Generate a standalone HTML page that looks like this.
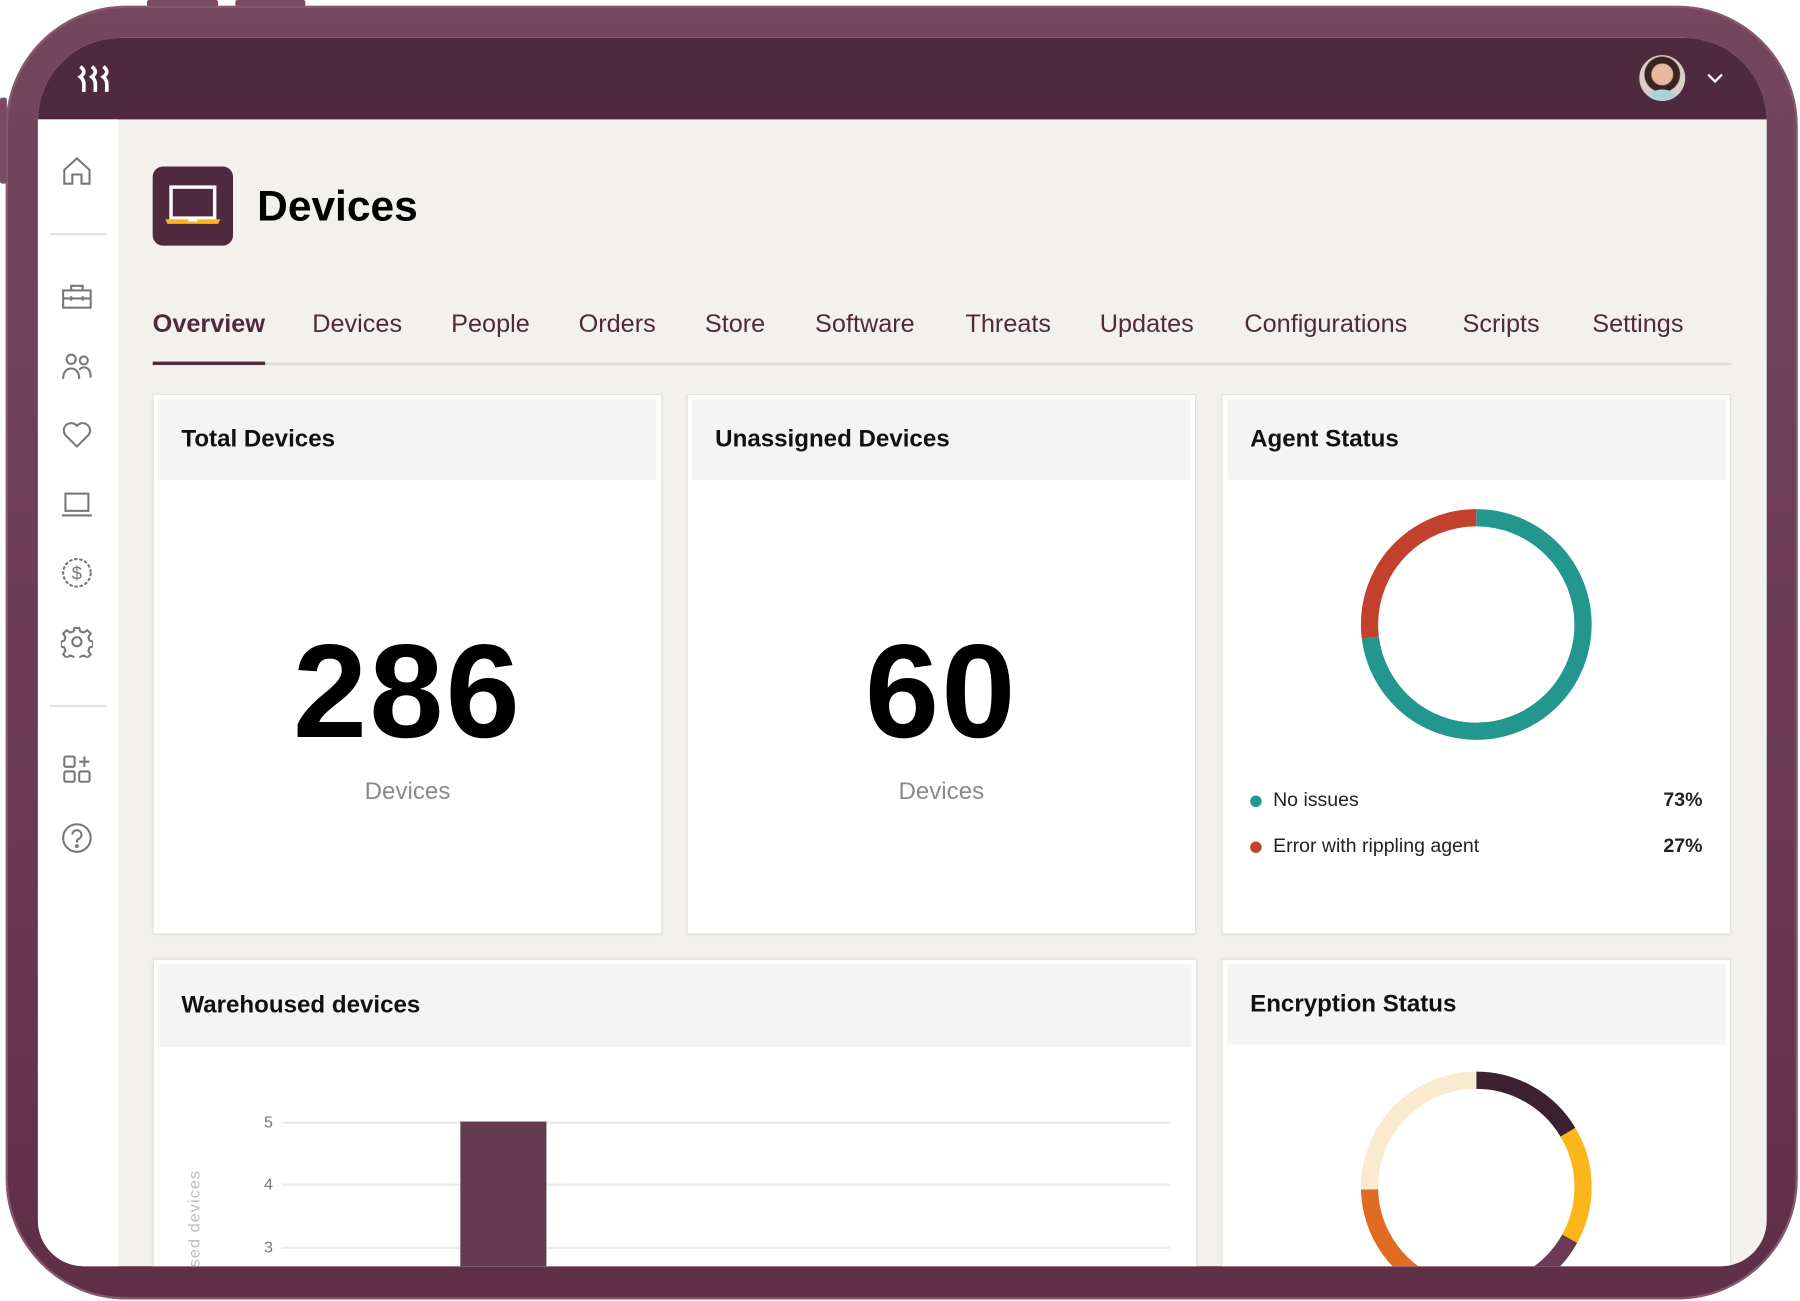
<!DOCTYPE html>
<html><head><meta charset="utf-8">
<style>
*{margin:0;padding:0;box-sizing:border-box}
html,body{width:1800px;height:1301px;overflow:hidden;background:#fff;font-family:"Liberation Sans",sans-serif}
#w{position:absolute;left:0;top:0;width:1568px;height:1133px;transform:scale(1.14796);transform-origin:0 0}
.abs{position:absolute}
.frame{left:5px;top:5px;width:1561px;height:1127px;border-radius:105px;background:linear-gradient(180deg,#74475e,#6a3b53 60%,#5f2f47);box-shadow:inset 0 0 0 2px #86586e}
.btn{background:#7a4a62;border-radius:2px}
.screen{left:33px;top:33px;width:1506px;height:1070px;border-radius:72px 72px 40px 40px;overflow:hidden;background:#f3f1ed}
.top{left:0;top:0;width:1506px;height:71px;background:#4f2a3e}
.side{left:0;top:71px;width:70px;height:1000px;background:#fff}
.ic{position:absolute;left:20px;width:28px;height:28px}
.div{position:absolute;left:10px;width:50px;height:2px;background:#e6e4e1}
.tabs span{position:absolute;top:0;font-size:22px;color:#4f2a3e;white-space:nowrap}
.card{position:absolute;background:#fff;border:1px solid #e2e0dc;box-shadow:0 1px 2px rgba(0,0,0,.06)}
.hd{position:absolute;left:4px;top:4px;right:4px;height:70px;background:#f4f4f4}
.hd b{position:absolute;left:20px;top:50%;transform:translateY(-50%);font-size:21px;font-weight:700;color:#111}
.big{position:absolute;left:0;right:0;text-align:center;font-weight:700;color:#000}
.sub{position:absolute;left:0;right:0;text-align:center;font-size:21px;color:#8a8a8a}
.lg{position:absolute;font-size:17px;color:#222}
</style></head><body>
<div id="w">
<div class="abs btn" style="left:128px;top:0;width:62px;height:6px"></div>
<div class="abs btn" style="left:205px;top:0;width:61px;height:6px"></div>
<div class="abs btn" style="left:0;top:85px;width:6px;height:75px"></div>
<div class="abs frame"></div>
<div class="abs screen">
  <div class="abs top">
    <svg class="abs" style="left:34px;top:24px" width="32" height="24" viewBox="0 0 32 24" fill="none" stroke="#fff" stroke-width="3.2" stroke-linecap="butt">
      <path d="M3 1c4 3 4 6 0 9c4 3 3 7 3 13"/><path d="M13 1c4 3 4 6 0 9c4 3 3 7 3 13"/><path d="M23 1c4 3 4 6 0 9c4 3 3 7 3 13"/>
    </svg>
    <div class="abs" style="left:1395px;top:15px;width:40px;height:40px;border-radius:50%;background:radial-gradient(circle at 50% 42%,#e6b89c 0 9px,#3a2420 10px 15px,#d9cfc8 16px);overflow:hidden">
      <div class="abs" style="left:8px;top:30px;width:24px;height:12px;border-radius:50% 50% 0 0;background:#a9d3d8"></div>
    </div>
    <svg class="abs" style="left:1453px;top:29px" width="16" height="12" viewBox="0 0 16 12"><path d="M2 3l6 6 6-6" stroke="#fff" stroke-width="2" fill="none"/></svg>
  </div>
  <div class="abs side">
    <svg class="ic" style="top:31px" viewBox="0 0 28 28" fill="none" stroke="#777" stroke-width="1.8"><path d="M3 13L14 3l11 10v12h-7v-8h-8v8H3z"/></svg>
    <div class="div" style="top:99px"></div>
    <svg class="ic" style="top:141px" viewBox="0 0 28 28" fill="none" stroke="#777" stroke-width="1.8"><rect x="2" y="8" width="24" height="15"/><path d="M9 8V4h10v4M2 15h24M9 13v4M19 13v4"/></svg>
    <svg class="ic" style="top:201px" viewBox="0 0 28 28" fill="none" stroke="#777" stroke-width="1.8"><circle cx="9" cy="8" r="4"/><circle cx="20" cy="9" r="3.5"/><path d="M2 25c0-6 3-9 7-9s7 3 7 9M16 17c1-1 2-2 4-2 4 0 6 3 6 9"/></svg>
    <svg class="ic" style="top:261px" viewBox="0 0 28 28" fill="none" stroke="#777" stroke-width="1.8"><path d="M14 24L4 14a6 6 0 0 1 10-8 6 6 0 0 1 10 8z"/></svg>
    <svg class="ic" style="top:321px" viewBox="0 0 28 28" fill="none" stroke="#777" stroke-width="1.8"><rect x="4" y="5" width="20" height="15"/><path d="M1 24h26"/></svg>
    <svg class="ic" style="top:381px" viewBox="0 0 28 28" fill="none" stroke="#777" stroke-width="1.8"><circle cx="14" cy="14" r="12" stroke-dasharray="3 1.5"/><text x="14" y="20" font-size="16" text-anchor="middle" fill="#777" stroke="none" font-family="Liberation Sans">$</text></svg>
    <svg class="ic" style="top:441px" viewBox="0 0 28 28" fill="none" stroke="#777" stroke-width="1.8"><path d="M12 2h4l1 3 3 1 3-2 3 3-2 3 1 3 3 1v4l-3 1-1 3 2 3-3 3-3-2-3 1-1 3h-4l-1-3-3-1-3 2-3-3 2-3-1-3-3-1v-4l3-1 1-3-2-3 3-3 3 2 3-1z"/><circle cx="14" cy="14" r="4"/></svg>
    <div class="div" style="top:510px"></div>
    <svg class="ic" style="top:552px" viewBox="0 0 28 28" fill="none" stroke="#777" stroke-width="1.8"><rect x="3" y="3" width="9" height="9" rx="1.5"/><rect x="3" y="16" width="9" height="9" rx="1.5"/><rect x="16" y="16" width="9" height="9" rx="1.5"/><path d="M20.5 3v9M16 7.5h9"/></svg>
    <svg class="ic" style="top:612px" viewBox="0 0 28 28" fill="none" stroke="#777" stroke-width="1.8"><circle cx="14" cy="14" r="12"/><path d="M10 11a4 4 0 1 1 5 4c-1 .5-1 1.5-1 3"/><circle cx="14" cy="21" r=".8" fill="#777"/></svg>
  </div>
  <div class="abs" style="left:100px;top:112px;width:70px;height:69px;border-radius:9px;background:#4f2a3e">
    <svg class="abs" style="left:11px;top:16px" width="48" height="36" viewBox="0 0 48 36"><rect x="5" y="2" width="38" height="27" fill="none" stroke="#fff" stroke-width="3"/><path d="M0 30h48l-2 4H2z" fill="#fbb61b"/><rect x="20" y="30" width="8" height="2" fill="#fff"/></svg>
  </div>
  <div class="abs" style="left:191px;top:126px;font-size:37px;font-weight:700;color:#000">Devices</div>
  <div class="abs tabs" style="left:0;top:236px;width:1500px;height:30px">
    <span style="left:100px;font-weight:700">Overview</span>
    <span style="left:239px">Devices</span>
    <span style="left:360px">People</span>
    <span style="left:471px">Orders</span>
    <span style="left:581px">Store</span>
    <span style="left:677px">Software</span>
    <span style="left:808px">Threats</span>
    <span style="left:925px">Updates</span>
    <span style="left:1051px">Configurations</span>
    <span style="left:1241px">Scripts</span>
    <span style="left:1354px">Settings</span>
  </div>
  <div class="abs" style="left:100px;top:283px;width:1376px;height:2px;background:#e0ddd9"></div>
  <div class="abs" style="left:100px;top:282px;width:98px;height:3px;background:#4f2a3e"></div>

  <div class="card" style="left:100px;top:310px;width:444px;height:471px"><div class="hd"><b>Total Devices</b></div>
    <div class="big" style="top:199px;font-size:116px;line-height:118px;letter-spacing:2px">286</div>
    <div class="sub" style="top:334px">Devices</div></div>
  <div class="card" style="left:565px;top:310px;width:444px;height:471px"><div class="hd"><b>Unassigned Devices</b></div>
    <div class="big" style="top:199px;font-size:116px;line-height:118px;letter-spacing:2px">60</div>
    <div class="sub" style="top:334px">Devices</div></div>
  <div class="card" style="left:1031px;top:310px;width:444px;height:471px"><div class="hd"><b>Agent Status</b></div>
    <svg class="abs" style="left:120px;top:99px" width="202" height="202" viewBox="0 0 202 202">
      <g transform="rotate(-90 101 101)" fill="none" stroke-width="15">
        <circle cx="101" cy="101" r="93" stroke="#23968e" stroke-dasharray="426.5 600"/>
        <circle cx="101" cy="101" r="93" stroke="#c2412d" stroke-dasharray="157.8 600" stroke-dashoffset="-426.5"/>
      </g></svg>
    <div class="abs" style="left:24px;top:349px;width:10px;height:10px;border-radius:50%;background:#23968e"></div>
    <div class="lg" style="left:44px;top:343px">No issues</div>
    <div class="lg" style="right:24px;top:343px;font-weight:700">73%</div>
    <div class="abs" style="left:24px;top:389px;width:10px;height:10px;border-radius:50%;background:#c2412d"></div>
    <div class="lg" style="left:44px;top:383px">Error with rippling agent</div>
    <div class="lg" style="right:24px;top:383px;font-weight:700">27%</div>
  </div>

  <div class="card" style="left:100px;top:802px;width:910px;height:300px"><div class="hd" style="height:72px"><b>Warehoused devices</b></div>
    <div class="abs" style="left:111px;top:141px;width:774px;height:2px;background:#ececec"></div>
    <div class="abs" style="left:111px;top:195px;width:774px;height:2px;background:#ececec"></div>
    <div class="abs" style="left:111px;top:250px;width:774px;height:2px;background:#ececec"></div>
    <div class="abs" style="left:96px;top:133px;font-size:14px;color:#777">5</div>
    <div class="abs" style="left:96px;top:187px;font-size:14px;color:#777">4</div>
    <div class="abs" style="left:96px;top:242px;font-size:14px;color:#777">3</div>
    <div class="abs" style="left:267px;top:141px;width:75px;height:200px;background:#663a50"></div>
    <div class="abs" style="left:-45px;top:255px;width:160px;font-size:14px;color:#bbb;transform:rotate(-90deg);text-align:right;letter-spacing:1px;white-space:nowrap">Warehoused devices</div>
  </div>
  <div class="card" style="left:1031px;top:802px;width:444px;height:300px"><div class="hd" style="height:70px"><b>Encryption Status</b></div>
    <svg class="abs" style="left:120px;top:97px" width="202" height="202" viewBox="0 0 202 202">
      <g transform="rotate(-90 101 101)" fill="none" stroke-width="15">
        <circle cx="101" cy="101" r="93" stroke="#3d2130" stroke-dasharray="96 600"/>
        <circle cx="101" cy="101" r="93" stroke="#fbb61b" stroke-dasharray="97 600" stroke-dashoffset="-96"/>
        <circle cx="101" cy="101" r="93" stroke="#6b3a55" stroke-dasharray="131 600" stroke-dashoffset="-193"/>
        <circle cx="101" cy="101" r="93" stroke="#e06b22" stroke-dasharray="112 600" stroke-dashoffset="-324"/>
        <circle cx="101" cy="101" r="93" stroke="#faebd0" stroke-dasharray="149 600" stroke-dashoffset="-436"/>
      </g></svg>
  </div>
</div>
</div>
</body></html>
